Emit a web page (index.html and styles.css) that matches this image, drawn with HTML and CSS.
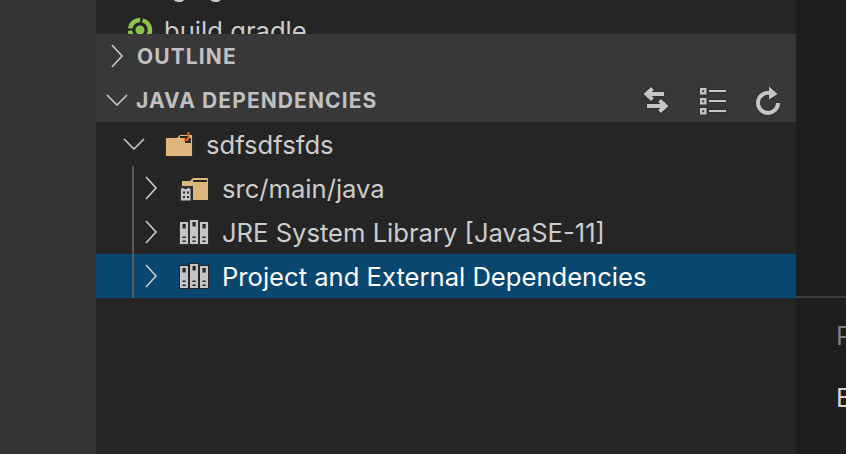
FILE: index.html
```html
<!DOCTYPE html>
<html lang="en">
<head>
<meta charset="utf-8">
<title>Java Dependencies</title>
<link rel="stylesheet" href="styles.css">
</head>
<body>
<div class="window">
  <div class="activity"></div>
  <div class="sidebar">
    <div class="files">
      <div class="file-list">
        <div class="file-row">
          <span class="file-spacer"></span>
          <span>.gitignore</span>
        </div>
        <div class="file-row">
          <svg viewBox="0 0 26 26" width="26" height="26"><circle cx="13" cy="13" r="10" fill="none" stroke="#8bc34a" stroke-width="4.5" stroke-dasharray="14 2.5"/><circle cx="13" cy="13" r="4.5" fill="#8bc34a"/></svg>
          <span>build.gradle</span>
        </div>
      </div>
    </div>
    <div class="header"><svg viewBox="0 0 16 24" width="16" height="24"><path d="M3 1l10 11L3 23" fill="none" stroke="#c5c5c5" stroke-width="1.700"/></svg><span class="title">OUTLINE</span></div>
    <div class="header open">
      <svg viewBox="0 0 22 12" width="22" height="12"><path d="M1 1l10 10L21 1" fill="none" stroke="#c5c5c5" stroke-width="1.600"/></svg>
      <span class="title">JAVA DEPENDENCIES</span>
      <div class="actions">
        <svg class="halo" viewBox="0 0 28 28" width="28" height="28"><path d="M4 8h18M10.500 2.500L4.500 8l6 5.500M5 20h18M17.500 14.500l6 5.500-6 5.500" fill="none" stroke="#c5c5c5" stroke-width="4"/></svg>
        <svg class="halo" viewBox="0 0 28 28" width="28" height="28"><path d="M2 2h6.500v6.500H2zM2 12h6.500v6.500H2zM2 22h6.500v6.500H2z" fill="#c5c5c5"/><path d="M4.200 4.200h2v2h-2zM4.200 14.200h2v2h-2zM4.200 24.200h2v2h-2z" fill="#383838"/><path d="M11 5h17M11 15h17M11 25h17" stroke="#c5c5c5" stroke-width="2"/></svg>
        <svg class="halo" viewBox="0 0 28 28" width="28" height="28"><path d="M16.500 7.200A10 10 0 1 0 24 17" fill="none" stroke="#c5c5c5" stroke-width="4"/><path d="M15 .5l8.500 7.500-8.500 5.500z" fill="#c5c5c5"/></svg>
      </div>
    </div>
    <div class="tree">
      <div class="row root">
        <svg viewBox="0 0 22 12" width="22" height="12"><path d="M1 1l10 10L21 1" fill="none" stroke="#c5c5c5" stroke-width="1.600"/></svg>
        <svg class="icon" viewBox="0 0 30 26" width="30" height="26"><path d="M0 6h11l3-3h15v23H0z" fill="#2d2d2d"/><path d="M1 7h11l3-3h12v21H1z" fill="#dcb67a"/><path d="M15 6h8" stroke="#252526" stroke-width="2"/><path d="M20 7h6v5h-6z" fill="#2d2d2d"/><path d="M23.500 1v6l-1.500 2h-3" fill="none" stroke="#e8610e" stroke-width="2.200"/></svg>
        <span>sdfsdfsfds</span>
      </div>
      <div class="children">
        <div class="row">
          <svg viewBox="0 0 16 24" width="16" height="24"><path d="M3 1l10 11L3 23" fill="none" stroke="#c5c5c5" stroke-width="1.700"/></svg>
          <svg class="icon" viewBox="0 0 30 26" width="30" height="26"><path d="M3 6h8l3-3h15v22H3z" fill="#dcb67a"/><path d="M14 6h14" stroke="#252526" stroke-width="2"/><path d="M0 11h14v15H0z" fill="#2d2d2d"/><path d="M2 14l2-1.500 1 1.500h3l1-1.500 2.500 1.500v11.500H2z" fill="#c5c5c5"/><path d="M4 16.500h2v2H4zM8 16.500h2v2H8zM4 21h2v2H4zM8 21h2v2H8z" fill="#2d2d2d"/></svg>
          <span>src/main/java</span>
        </div>
        <div class="row">
          <svg viewBox="0 0 16 24" width="16" height="24"><path d="M3 1l10 11L3 23" fill="none" stroke="#c5c5c5" stroke-width="1.700"/></svg>
          <svg class="icon" viewBox="0 0 30 26" width="30" height="26"><path d="M0 2h10V0h10v2h10v24H0z" fill="#2d2d2d"/><path d="M1 3h8v22H1zM11 1h8v24h-8zM21 3h8v22h-8z" fill="#c5c5c5"/><path d="M3.500 5h3.200v4.500H3.500zM13.500 3h3.200v4.500h-3.200zM23.500 5h3.200v4.500h-3.200zM3.500 17.500h3.200V19H3.500zM3.500 21.500h3.200V23H3.500zM13.500 17.500h3.200V19h-3.200zM13.500 21.500h3.200V23h-3.200zM23.500 17.500h3.200V19h-3.200zM23.500 21.500h3.200V23h-3.200z" fill="#252526"/></svg>
          <span>JRE System Library [JavaSE-11]</span>
        </div>
        <div class="row selected">
          <svg viewBox="0 0 16 24" width="16" height="24"><path d="M3 1l10 11L3 23" fill="none" stroke="#c5c5c5" stroke-width="1.700"/></svg>
          <svg class="icon" viewBox="0 0 30 26" width="30" height="26"><path d="M0 2h10V0h10v2h10v24H0z" fill="#252526"/><path d="M1 3h8v22H1zM11 1h8v24h-8zM21 3h8v22h-8z" fill="#c5c5c5"/><path d="M3.500 5h3.200v4.500H3.500zM13.500 3h3.200v4.500h-3.200zM23.500 5h3.200v4.500h-3.200zM3.500 17.500h3.200V19H3.500zM3.500 21.500h3.200V23H3.500zM13.500 17.500h3.200V19h-3.200zM13.500 21.500h3.200V23h-3.200zM23.500 17.500h3.200V19h-3.200zM23.500 21.500h3.200V23h-3.200z" fill="#252526"/></svg>
          <span>Project and External Dependencies</span>
        </div>
      </div>
    </div>
  </div>
  <div class="editor">
    <div class="editor-top"></div>
    <div class="panel">
      <div class="panel-line dim">P</div>
      <div class="panel-line">B</div>
    </div>
  </div>
</div>
</body>
</html>
```

FILE: styles.css
```css
* { box-sizing: border-box; }
html, body { margin: 0; height: 100%; background: #1e1e1e; }
.window {
  display: flex;
  width: 846px;
  height: 454px;
  overflow: hidden;
  font-family: Inter, "Liberation Sans", sans-serif;
  font-size: 25.6px;
  color: #cccccc;
}
.activity { width: 96px; background: #333333; flex: none; }
.sidebar { width: 700px; background: #252526; flex: none; display: flex; flex-direction: column; }
.files { height: 34px; overflow: hidden; flex: none; }
.file-list { margin-top: -36px; }
.file-row { display: flex; align-items: center; gap: 11px; height: 44px; padding-left: 31px; }
.file-spacer { width: 26px; height: 26px; }
.header {
  height: 44px;
  background: #383838;
  display: flex;
  align-items: center;
  padding-left: 13px;
  gap: 12px;
  flex: none;
}
.header.open { padding-left: 10px; gap: 8px; }
.title { font-size: 21px; font-weight: 700; letter-spacing: 1.1px; color: #c0c0c0; }
.actions { margin-left: auto; display: flex; gap: 28px; padding-right: 14px; }
.halo { filter: drop-shadow(0 0 1px #252526); overflow: visible; }
.tree { display: flex; flex-direction: column; }
.row { height: 44px; display: flex; align-items: center; padding-left: 47px; }
.row .icon { margin-left: 20px; margin-right: 13px; }
.row.root { padding-left: 27px; }
.row.root .icon { margin-left: 20px; margin-right: 11px; }
.children { position: relative; }
.children::before { content: ""; position: absolute; left: 36px; top: 0; bottom: 0; width: 2px; background: #585858; z-index: 1; }
.selected { background: #094771; color: #ffffff; }
.editor { flex: 1; display: flex; flex-direction: column; }
.editor-top { height: 298px; border-bottom: 2px solid #3c3c3c; flex: none; }
.panel { flex: 1; padding: 7px 0 0 40px; overflow: hidden; }
.panel-line { line-height: 62px; color: #d4d4d4; }
.panel-line.dim { color: #7f7f7f; }
```
